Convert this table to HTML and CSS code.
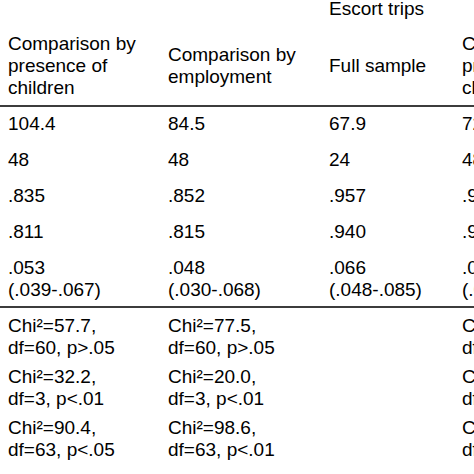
FILE: index.html
```html
<!DOCTYPE html>
<html>
<head>
<meta charset="utf-8">
<link rel="stylesheet" href="styles.css">
</head>
<body>
<div class="frame">
<table class="stats">
<colgroup>
<col class="c1"><col class="c2"><col class="c3"><col class="c4">
</colgroup>
<tr class="group">
<td></td><td></td><td colspan="2">Escort trips</td>
</tr>
<tr class="head">
<th>Comparison by<br>presence of<br>children</th>
<th>Comparison by<br>employment</th>
<th>Full sample</th>
<th>Comparison by<br>presence of<br>children</th>
</tr>
<tr class="data"><td>104.4</td><td>84.5</td><td>67.9</td><td>72.6</td></tr>
<tr class="data"><td>48</td><td>48</td><td>24</td><td>48</td></tr>
<tr class="data"><td>.835</td><td>.852</td><td>.957</td><td>.938</td></tr>
<tr class="data"><td>.811</td><td>.815</td><td>.940</td><td>.916</td></tr>
<tr class="data last"><td>.053<br>(.039-.067)</td><td>.048<br>(.030-.068)</td><td>.066<br>(.048-.085)</td><td>.053<br>(.030-.075)</td></tr>
<tr class="chi"><td>Chi²=57.7,<br>df=60, p&gt;.05</td><td>Chi²=77.5,<br>df=60, p&gt;.05</td><td></td><td>Chi²=26.2,<br>df=24, p&gt;.05</td></tr>
<tr class="chi"><td>Chi²=32.2,<br>df=3, p&lt;.01</td><td>Chi²=20.0,<br>df=3, p&lt;.01</td><td></td><td>Chi²=12.4,<br>df=3, p&lt;.01</td></tr>
<tr class="chi"><td>Chi²=90.4,<br>df=63, p&lt;.05</td><td>Chi²=98.6,<br>df=63, p&lt;.01</td><td></td><td>Chi²=38.6,<br>df=27, p&gt;.05</td></tr>
</table>
</div>
</body>
</html>
```
FILE: styles.css
```css
html, body {
  margin: 0;
  padding: 0;
  background: #ffffff;
}
.frame {
  width: 474px;
  height: 474px;
  overflow: hidden;
}
.stats {
  margin-top: -2px;
  table-layout: fixed;
  width: 654px;
  border-collapse: separate;
  border-spacing: 0;
  font-family: "Liberation Sans", Arial, Helvetica, sans-serif;
  font-size: 19px;
  line-height: 22px;
  color: #000000;
}
.c1 { width: 160px; }
.c2 { width: 161px; }
.c3 { width: 133px; }
.c4 { width: 200px; }
.stats td, .stats th {
  padding: 0 0 0 8px;
  text-align: left;
  font-weight: normal;
  white-space: nowrap;
}
.group td {
  padding-top: 0;
  padding-bottom: 0;
}
.head th {
  padding-top: 13px;
  padding-bottom: 6px;
  vertical-align: middle;
  border-bottom: 2px solid #3c3c3c;
}
.data td {
  padding-top: 6px;
  padding-bottom: 8px;
  vertical-align: top;
}
.data.last td {
  padding-bottom: 5px;
  border-bottom: 2px solid #3c3c3c;
}
.chi td {
  padding-top: 7px;
  padding-bottom: 0;
  vertical-align: top;
}
```
